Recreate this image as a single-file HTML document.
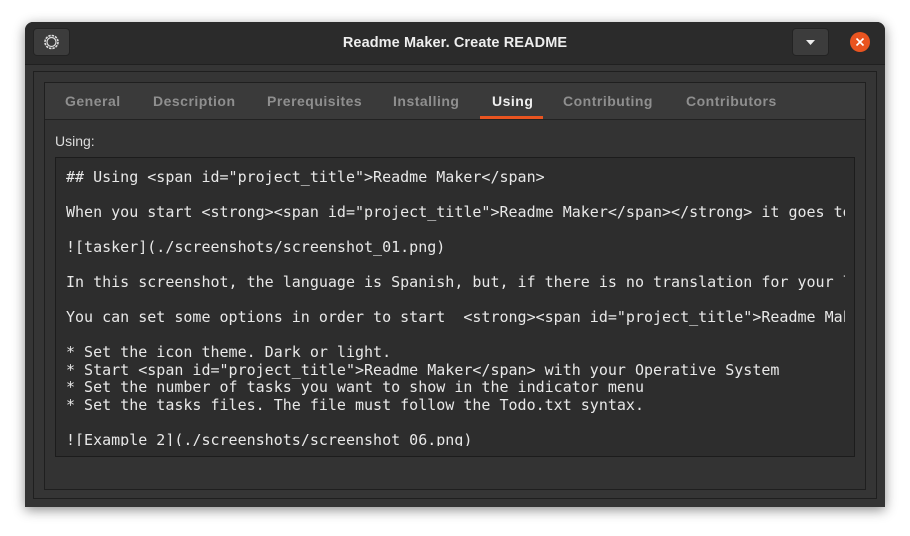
<!DOCTYPE html>
<html><head><style>
body{margin:0;width:910px;height:536px;background:#fff;position:relative;overflow:hidden;font-family:"Liberation Sans",sans-serif}
.win{position:absolute;left:25px;top:22px;width:860px;height:485px;background:#353535;border-radius:8px 8px 0 0;box-shadow:0 3px 12px rgba(0,0,0,.45);overflow:hidden}
.tb{position:absolute;left:0;top:0;width:860px;height:42px;background:#2b2b2b;border-bottom:1px solid #202020}
.title{position:absolute;left:0;right:0;top:13px;text-align:center;color:#eee;font-weight:bold;font-size:14.5px;letter-spacing:0.1px}
.btn{position:absolute;top:6px;width:37px;height:28px;background:#3c3c3c;border-radius:4px;border:1px solid #232323;box-sizing:border-box}
.close{position:absolute;left:825px;top:10px;width:20px;height:20px;border-radius:50%;background:#e95420}
.f1{position:absolute;left:8px;top:49px;width:844px;height:428px;border:1px solid #1f1f1f;box-sizing:border-box}
.f2{position:absolute;left:19px;top:60px;width:822px;height:408px;border:1px solid #1f1f1f;box-sizing:border-box;background:#333}
.tabs{position:absolute;left:0;top:0;width:820px;height:36px;background:#3a3a3a;border-bottom:1px solid #222}
.tab{position:absolute;top:10px;font-weight:bold;font-size:14px;letter-spacing:0.5px;color:#8f8f8f}
.ul{position:absolute;left:435px;top:33px;width:63px;height:3px;background:#e95420}
.lbl{position:absolute;left:10px;top:50px;color:#ddd;font-size:14px}
.tv{position:absolute;left:10px;top:74px;width:800px;height:300px;background:#2d2d2d;border:1px solid #1c1c1c;box-sizing:border-box;overflow:hidden}
.clip{position:absolute;left:0;top:0;width:789px;height:288px;overflow:hidden}
pre{margin:0;position:absolute;left:10px;top:11px;font-family:"DejaVu Sans Mono","Liberation Mono",monospace;font-size:15px;line-height:17.5px;color:#e8e8e8;white-space:pre}
</style></head><body>
<div class="win">
<div class="tb">
<div class="btn" style="left:8px"><svg width="35" height="26" viewBox="0 0 35 26"><circle cx="17.5" cy="13" r="6.5" fill="none" stroke="#ddd" stroke-width="1.6" stroke-dasharray="2.4 1"/><circle cx="17.5" cy="13" r="4.5" fill="none" stroke="#ddd" stroke-width="1.2"/></svg></div>
<div class="title">Readme Maker. Create README</div>
<div class="btn" style="left:767px"><svg width="35" height="26" viewBox="0 0 35 26"><path d="M13 11h9l-4.5 5z" fill="#eee"/></svg></div>
<div class="close"><svg width="20" height="20"><path d="M6.5 6.5l7 7M13.5 6.5l-7 7" stroke="#fff" stroke-width="1.6"/></svg></div>
</div>
<div class="f1"></div>
<div class="f2">
<div class="tabs">
<span class="tab" style="left:20px">General</span>
<span class="tab" style="left:108px">Description</span>
<span class="tab" style="left:222px">Prerequisites</span>
<span class="tab" style="left:348px">Installing</span>
<span class="tab" style="left:447px;color:#eee">Using</span>
<span class="tab" style="left:518px">Contributing</span>
<span class="tab" style="left:641px">Contributors</span>
<div class="ul"></div>
</div>
<div class="lbl">Using:</div>
<div class="tv"><div class="clip"><pre>## Using &lt;span id="project_title"&gt;Readme Maker&lt;/span&gt;

When you start &lt;strong&gt;&lt;span id="project_title"&gt;Readme Maker&lt;/span&gt;&lt;/strong&gt; it goes to

![tasker](./screenshots/screenshot_01.png)

In this screenshot, the language is Spanish, but, if there is no translation for your l

You can set some options in order to start  &lt;strong&gt;&lt;span id="project_title"&gt;Readme Mak

* Set the icon theme. Dark or light.
* Start &lt;span id="project_title"&gt;Readme Maker&lt;/span&gt; with your Operative System
* Set the number of tasks you want to show in the indicator menu
* Set the tasks files. The file must follow the Todo.txt syntax.

![Example 2](./screenshots/screenshot_06.png)</pre></div></div>
</div>
</div>
</body></html>
